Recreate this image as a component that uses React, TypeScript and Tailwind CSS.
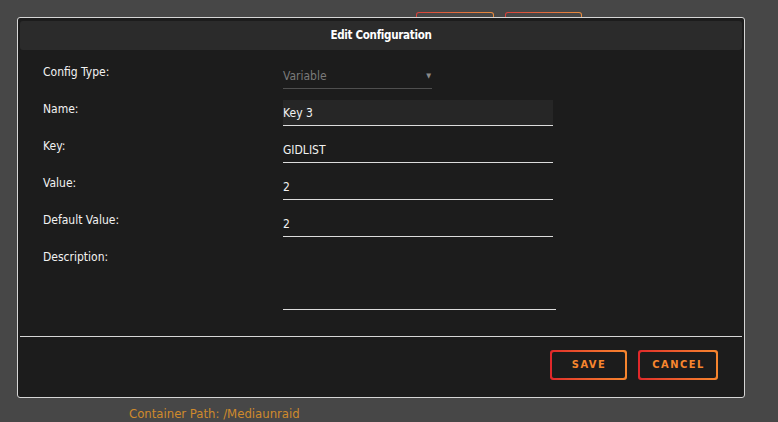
import React from "react"

const font = { fontFamily: '"DejaVu Sans Condensed", "Liberation Sans", sans-serif' }

function GradientButton({ label, w }: { label: string; w: string }) {
  return (
    <div className={`h-[30px] rounded-[3px] bg-gradient-to-r from-[#e0262a] to-[#f7862e] p-[2px] ${w}`}>
      <div className="flex h-full w-full items-center justify-center rounded-[2px] bg-[#1c1c1c] pl-[1px] text-[11px] font-bold tracking-[1.5px] text-[#f7862e]">
        {label}
      </div>
    </div>
  )
}

function Row({ label, children }: { label: string; children: React.ReactNode }) {
  return (
    <div className="flex">
      <div className="w-[240px] pt-[1px] text-[12px] leading-[16px] text-[#f2f2f2]">{label}</div>
      {children}
    </div>
  )
}

function TextField({ value, filled }: { value: string; filled?: boolean }) {
  return (
    <div className={`flex h-[26px] w-[270px] items-center border-b border-[#dcdcdc] pt-[1px] text-[12px] text-[#f2f2f2] ${filled ? "bg-[#262626]" : ""}`}>
      {value}
    </div>
  )
}

export default function App() {
  return (
    <div className="relative h-[422px] w-[778px] overflow-hidden bg-[#474747]" style={font}>
      {/* page behind the dialog */}
      <div className="flex h-full flex-col">
        <div className="flex gap-[11px] pl-[416px] pt-[12px]">
          <div className="h-[30px] w-[78px] rounded-[3px] bg-gradient-to-r from-[#d9403a] to-[#e88c3e] p-[1px]">
            <div className="h-full w-full rounded-[2px] bg-[#474747]" />
          </div>
          <div className="h-[30px] w-[77px] rounded-[3px] bg-gradient-to-r from-[#d9403a] to-[#e88c3e] p-[1px]">
            <div className="h-full w-full rounded-[2px] bg-[#474747]" />
          </div>
        </div>
        <div className="mt-auto pl-[129px] text-[13px] leading-[16px] text-[#cf8a2c]">Container Path: /Mediaunraid</div>
      </div>

      {/* dialog */}
      <div className="absolute left-[17px] top-[17px] flex h-[381px] w-[728px] flex-col rounded-[3px] border border-[#d6d6d6] bg-[#1c1c1c] px-[2px] pt-[3px]">
        <div className="flex h-[29px] items-center justify-center rounded-[3px] bg-[#2b2b2b] text-[11.5px] font-bold tracking-[-0.3px] text-white">
          Edit Configuration
        </div>

        <div className="flex flex-col gap-[11px] pl-[23px] pt-[13px]">
          <Row label="Config Type:">
            <div className="flex h-[26px] w-[149px] items-center justify-between border-b border-[#4f4f4f] pr-[1px] pt-[1px] text-[12px] text-[#7a7a7a]">
              <span>Variable</span>
              <span className="text-[7px] text-[#8a8a8a]">▼</span>
            </div>
          </Row>
          <Row label="Name:">
            <TextField value="Key 3" filled />
          </Row>
          <Row label="Key:">
            <TextField value="GIDLIST" />
          </Row>
          <Row label="Value:">
            <TextField value="2" />
          </Row>
          <Row label="Default Value:">
            <TextField value="2" />
          </Row>
          <Row label="Description:">
            <div className="h-[62px] w-[273px] border-b border-[#dcdcdc]" />
          </Row>
        </div>

        <div className="mt-[26px] border-t border-[#d6d6d6]" />

        <div className="flex justify-end gap-[11px] pr-[24px] pt-[13px]">
          <GradientButton label="SAVE" w="w-[77px]" />
          <GradientButton label="CANCEL" w="w-[80px]" />
        </div>
      </div>
    </div>
  )
}
